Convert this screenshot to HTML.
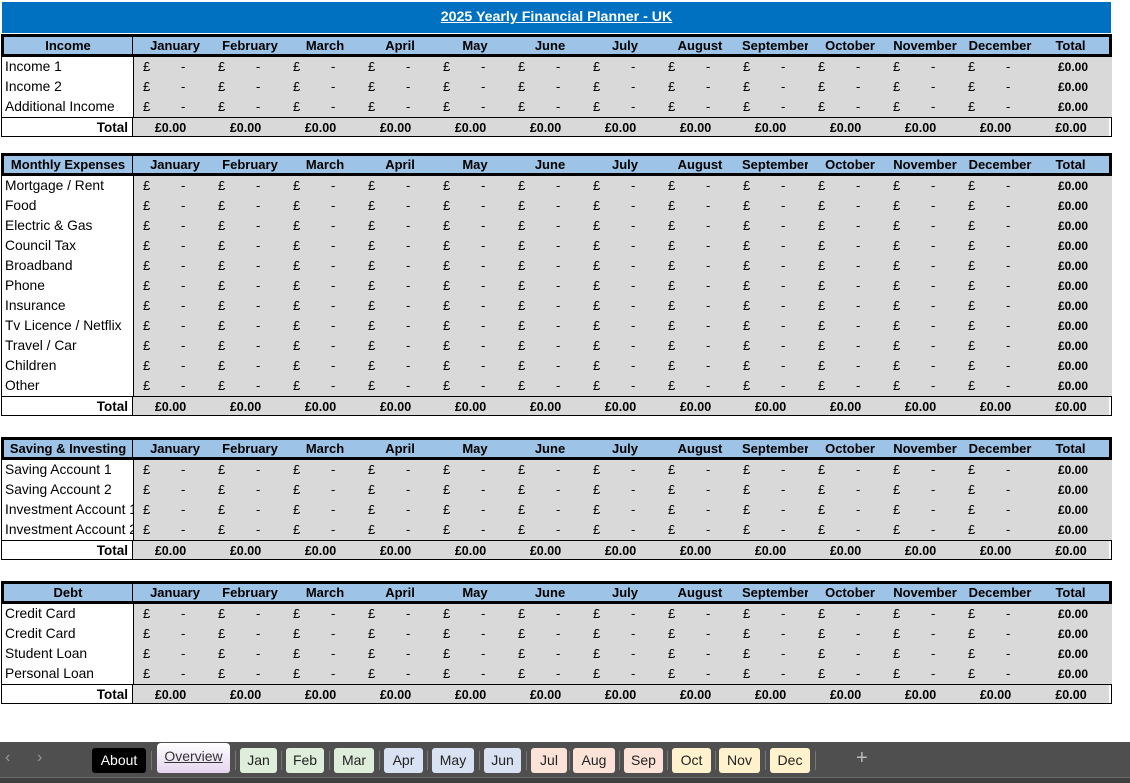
<!DOCTYPE html>
<html><head><meta charset="utf-8"><style>
*{box-sizing:border-box;margin:0;padding:0}
body{width:1130px;height:783px;overflow:hidden;background:#fff;font-family:"Liberation Sans",sans-serif;font-size:13px;color:#000;position:relative}
.title{position:absolute;left:2px;top:2px;width:1109px;height:31px;background:#0070c0;color:#fff;font-weight:bold;font-size:14.2px;text-align:center;line-height:31px;text-decoration:underline}
.sec{position:absolute;left:1px;width:1111px}
.r{display:flex;height:20px;line-height:20px}
.r>div{flex:none;position:relative;white-space:nowrap;overflow:hidden}
.l{width:132px;padding-left:3px;border-right:1px solid #000;background:#fff;font-size:13.8px}
.m{width:75px;background:#d9d9d9;padding-left:9px}
.m i{font-style:normal;position:absolute;left:47px}
.t{width:78px;background:#d9d9d9;text-align:center;font-weight:bold;font-size:12px}
.h{height:23px;line-height:17px;border:3px solid #000;background:#9dc3e6;font-weight:bold}
.r.h>div{background:#9dc3e6;text-align:center;font-size:13px;overflow:visible}
.h .l{width:129px;padding:0}
.h .t{width:75px}
.d{border-left:1px solid #000;border-right:1px solid #000}
.tot{border:1px solid #000;font-weight:bold}
.tot .l{text-align:right;padding-right:4px;width:131px;font-size:13.5px}
.tot .m{text-align:center;padding:0;font-size:12.5px}
.tot .t{width:76px;font-size:12.5px}
.tabs{position:absolute;left:0;top:742px;width:1130px;height:35px;background:#4f4f4f}
.status{position:absolute;left:0;top:777px;width:1130px;height:6px;background:#3f3f3f;border-top:1px solid #6a6a6a}
.tab{position:absolute;top:6px;height:25px;border-radius:3px;font-size:14px;line-height:25px;text-align:center;color:#222}
.sep{position:absolute;top:9px;width:1px;height:19px;background:#777}
</style></head><body>
<div class="title">2025 Yearly Financial Planner - UK</div>

<div class="sec" style="top:34px">
<div class="r h"><div class="l">Income</div><div class="m">January</div><div class="m">February</div><div class="m">March</div><div class="m">April</div><div class="m">May</div><div class="m">June</div><div class="m">July</div><div class="m">August</div><div class="m">September</div><div class="m">October</div><div class="m">November</div><div class="m">December</div><div class="t">Total</div></div>
<div class="r d"><div class="l">Income 1</div><div class="m">£<i>-</i></div><div class="m">£<i>-</i></div><div class="m">£<i>-</i></div><div class="m">£<i>-</i></div><div class="m">£<i>-</i></div><div class="m">£<i>-</i></div><div class="m">£<i>-</i></div><div class="m">£<i>-</i></div><div class="m">£<i>-</i></div><div class="m">£<i>-</i></div><div class="m">£<i>-</i></div><div class="m">£<i>-</i></div><div class="t">£0.00</div></div>
<div class="r d"><div class="l">Income 2</div><div class="m">£<i>-</i></div><div class="m">£<i>-</i></div><div class="m">£<i>-</i></div><div class="m">£<i>-</i></div><div class="m">£<i>-</i></div><div class="m">£<i>-</i></div><div class="m">£<i>-</i></div><div class="m">£<i>-</i></div><div class="m">£<i>-</i></div><div class="m">£<i>-</i></div><div class="m">£<i>-</i></div><div class="m">£<i>-</i></div><div class="t">£0.00</div></div>
<div class="r d"><div class="l">Additional Income</div><div class="m">£<i>-</i></div><div class="m">£<i>-</i></div><div class="m">£<i>-</i></div><div class="m">£<i>-</i></div><div class="m">£<i>-</i></div><div class="m">£<i>-</i></div><div class="m">£<i>-</i></div><div class="m">£<i>-</i></div><div class="m">£<i>-</i></div><div class="m">£<i>-</i></div><div class="m">£<i>-</i></div><div class="m">£<i>-</i></div><div class="t">£0.00</div></div>
<div class="r tot"><div class="l">Total</div><div class="m">£0.00</div><div class="m">£0.00</div><div class="m">£0.00</div><div class="m">£0.00</div><div class="m">£0.00</div><div class="m">£0.00</div><div class="m">£0.00</div><div class="m">£0.00</div><div class="m">£0.00</div><div class="m">£0.00</div><div class="m">£0.00</div><div class="m">£0.00</div><div class="t">£0.00</div></div>
</div>

<div class="sec" style="top:153px">
<div class="r h"><div class="l">Monthly Expenses</div><div class="m">January</div><div class="m">February</div><div class="m">March</div><div class="m">April</div><div class="m">May</div><div class="m">June</div><div class="m">July</div><div class="m">August</div><div class="m">September</div><div class="m">October</div><div class="m">November</div><div class="m">December</div><div class="t">Total</div></div>
<div class="r d"><div class="l">Mortgage / Rent</div><div class="m">£<i>-</i></div><div class="m">£<i>-</i></div><div class="m">£<i>-</i></div><div class="m">£<i>-</i></div><div class="m">£<i>-</i></div><div class="m">£<i>-</i></div><div class="m">£<i>-</i></div><div class="m">£<i>-</i></div><div class="m">£<i>-</i></div><div class="m">£<i>-</i></div><div class="m">£<i>-</i></div><div class="m">£<i>-</i></div><div class="t">£0.00</div></div>
<div class="r d"><div class="l">Food</div><div class="m">£<i>-</i></div><div class="m">£<i>-</i></div><div class="m">£<i>-</i></div><div class="m">£<i>-</i></div><div class="m">£<i>-</i></div><div class="m">£<i>-</i></div><div class="m">£<i>-</i></div><div class="m">£<i>-</i></div><div class="m">£<i>-</i></div><div class="m">£<i>-</i></div><div class="m">£<i>-</i></div><div class="m">£<i>-</i></div><div class="t">£0.00</div></div>
<div class="r d"><div class="l">Electric &amp; Gas</div><div class="m">£<i>-</i></div><div class="m">£<i>-</i></div><div class="m">£<i>-</i></div><div class="m">£<i>-</i></div><div class="m">£<i>-</i></div><div class="m">£<i>-</i></div><div class="m">£<i>-</i></div><div class="m">£<i>-</i></div><div class="m">£<i>-</i></div><div class="m">£<i>-</i></div><div class="m">£<i>-</i></div><div class="m">£<i>-</i></div><div class="t">£0.00</div></div>
<div class="r d"><div class="l">Council Tax</div><div class="m">£<i>-</i></div><div class="m">£<i>-</i></div><div class="m">£<i>-</i></div><div class="m">£<i>-</i></div><div class="m">£<i>-</i></div><div class="m">£<i>-</i></div><div class="m">£<i>-</i></div><div class="m">£<i>-</i></div><div class="m">£<i>-</i></div><div class="m">£<i>-</i></div><div class="m">£<i>-</i></div><div class="m">£<i>-</i></div><div class="t">£0.00</div></div>
<div class="r d"><div class="l">Broadband</div><div class="m">£<i>-</i></div><div class="m">£<i>-</i></div><div class="m">£<i>-</i></div><div class="m">£<i>-</i></div><div class="m">£<i>-</i></div><div class="m">£<i>-</i></div><div class="m">£<i>-</i></div><div class="m">£<i>-</i></div><div class="m">£<i>-</i></div><div class="m">£<i>-</i></div><div class="m">£<i>-</i></div><div class="m">£<i>-</i></div><div class="t">£0.00</div></div>
<div class="r d"><div class="l">Phone</div><div class="m">£<i>-</i></div><div class="m">£<i>-</i></div><div class="m">£<i>-</i></div><div class="m">£<i>-</i></div><div class="m">£<i>-</i></div><div class="m">£<i>-</i></div><div class="m">£<i>-</i></div><div class="m">£<i>-</i></div><div class="m">£<i>-</i></div><div class="m">£<i>-</i></div><div class="m">£<i>-</i></div><div class="m">£<i>-</i></div><div class="t">£0.00</div></div>
<div class="r d"><div class="l">Insurance</div><div class="m">£<i>-</i></div><div class="m">£<i>-</i></div><div class="m">£<i>-</i></div><div class="m">£<i>-</i></div><div class="m">£<i>-</i></div><div class="m">£<i>-</i></div><div class="m">£<i>-</i></div><div class="m">£<i>-</i></div><div class="m">£<i>-</i></div><div class="m">£<i>-</i></div><div class="m">£<i>-</i></div><div class="m">£<i>-</i></div><div class="t">£0.00</div></div>
<div class="r d"><div class="l">Tv Licence / Netflix</div><div class="m">£<i>-</i></div><div class="m">£<i>-</i></div><div class="m">£<i>-</i></div><div class="m">£<i>-</i></div><div class="m">£<i>-</i></div><div class="m">£<i>-</i></div><div class="m">£<i>-</i></div><div class="m">£<i>-</i></div><div class="m">£<i>-</i></div><div class="m">£<i>-</i></div><div class="m">£<i>-</i></div><div class="m">£<i>-</i></div><div class="t">£0.00</div></div>
<div class="r d"><div class="l">Travel / Car</div><div class="m">£<i>-</i></div><div class="m">£<i>-</i></div><div class="m">£<i>-</i></div><div class="m">£<i>-</i></div><div class="m">£<i>-</i></div><div class="m">£<i>-</i></div><div class="m">£<i>-</i></div><div class="m">£<i>-</i></div><div class="m">£<i>-</i></div><div class="m">£<i>-</i></div><div class="m">£<i>-</i></div><div class="m">£<i>-</i></div><div class="t">£0.00</div></div>
<div class="r d"><div class="l">Children</div><div class="m">£<i>-</i></div><div class="m">£<i>-</i></div><div class="m">£<i>-</i></div><div class="m">£<i>-</i></div><div class="m">£<i>-</i></div><div class="m">£<i>-</i></div><div class="m">£<i>-</i></div><div class="m">£<i>-</i></div><div class="m">£<i>-</i></div><div class="m">£<i>-</i></div><div class="m">£<i>-</i></div><div class="m">£<i>-</i></div><div class="t">£0.00</div></div>
<div class="r d"><div class="l">Other</div><div class="m">£<i>-</i></div><div class="m">£<i>-</i></div><div class="m">£<i>-</i></div><div class="m">£<i>-</i></div><div class="m">£<i>-</i></div><div class="m">£<i>-</i></div><div class="m">£<i>-</i></div><div class="m">£<i>-</i></div><div class="m">£<i>-</i></div><div class="m">£<i>-</i></div><div class="m">£<i>-</i></div><div class="m">£<i>-</i></div><div class="t">£0.00</div></div>
<div class="r tot"><div class="l">Total</div><div class="m">£0.00</div><div class="m">£0.00</div><div class="m">£0.00</div><div class="m">£0.00</div><div class="m">£0.00</div><div class="m">£0.00</div><div class="m">£0.00</div><div class="m">£0.00</div><div class="m">£0.00</div><div class="m">£0.00</div><div class="m">£0.00</div><div class="m">£0.00</div><div class="t">£0.00</div></div>
</div>

<div class="sec" style="top:437px">
<div class="r h"><div class="l">Saving &amp; Investing</div><div class="m">January</div><div class="m">February</div><div class="m">March</div><div class="m">April</div><div class="m">May</div><div class="m">June</div><div class="m">July</div><div class="m">August</div><div class="m">September</div><div class="m">October</div><div class="m">November</div><div class="m">December</div><div class="t">Total</div></div>
<div class="r d"><div class="l">Saving Account 1</div><div class="m">£<i>-</i></div><div class="m">£<i>-</i></div><div class="m">£<i>-</i></div><div class="m">£<i>-</i></div><div class="m">£<i>-</i></div><div class="m">£<i>-</i></div><div class="m">£<i>-</i></div><div class="m">£<i>-</i></div><div class="m">£<i>-</i></div><div class="m">£<i>-</i></div><div class="m">£<i>-</i></div><div class="m">£<i>-</i></div><div class="t">£0.00</div></div>
<div class="r d"><div class="l">Saving Account 2</div><div class="m">£<i>-</i></div><div class="m">£<i>-</i></div><div class="m">£<i>-</i></div><div class="m">£<i>-</i></div><div class="m">£<i>-</i></div><div class="m">£<i>-</i></div><div class="m">£<i>-</i></div><div class="m">£<i>-</i></div><div class="m">£<i>-</i></div><div class="m">£<i>-</i></div><div class="m">£<i>-</i></div><div class="m">£<i>-</i></div><div class="t">£0.00</div></div>
<div class="r d"><div class="l">Investment Account 1</div><div class="m">£<i>-</i></div><div class="m">£<i>-</i></div><div class="m">£<i>-</i></div><div class="m">£<i>-</i></div><div class="m">£<i>-</i></div><div class="m">£<i>-</i></div><div class="m">£<i>-</i></div><div class="m">£<i>-</i></div><div class="m">£<i>-</i></div><div class="m">£<i>-</i></div><div class="m">£<i>-</i></div><div class="m">£<i>-</i></div><div class="t">£0.00</div></div>
<div class="r d"><div class="l">Investment Account 2</div><div class="m">£<i>-</i></div><div class="m">£<i>-</i></div><div class="m">£<i>-</i></div><div class="m">£<i>-</i></div><div class="m">£<i>-</i></div><div class="m">£<i>-</i></div><div class="m">£<i>-</i></div><div class="m">£<i>-</i></div><div class="m">£<i>-</i></div><div class="m">£<i>-</i></div><div class="m">£<i>-</i></div><div class="m">£<i>-</i></div><div class="t">£0.00</div></div>
<div class="r tot"><div class="l">Total</div><div class="m">£0.00</div><div class="m">£0.00</div><div class="m">£0.00</div><div class="m">£0.00</div><div class="m">£0.00</div><div class="m">£0.00</div><div class="m">£0.00</div><div class="m">£0.00</div><div class="m">£0.00</div><div class="m">£0.00</div><div class="m">£0.00</div><div class="m">£0.00</div><div class="t">£0.00</div></div>
</div>

<div class="sec" style="top:581px">
<div class="r h"><div class="l">Debt</div><div class="m">January</div><div class="m">February</div><div class="m">March</div><div class="m">April</div><div class="m">May</div><div class="m">June</div><div class="m">July</div><div class="m">August</div><div class="m">September</div><div class="m">October</div><div class="m">November</div><div class="m">December</div><div class="t">Total</div></div>
<div class="r d"><div class="l">Credit Card</div><div class="m">£<i>-</i></div><div class="m">£<i>-</i></div><div class="m">£<i>-</i></div><div class="m">£<i>-</i></div><div class="m">£<i>-</i></div><div class="m">£<i>-</i></div><div class="m">£<i>-</i></div><div class="m">£<i>-</i></div><div class="m">£<i>-</i></div><div class="m">£<i>-</i></div><div class="m">£<i>-</i></div><div class="m">£<i>-</i></div><div class="t">£0.00</div></div>
<div class="r d"><div class="l">Credit Card</div><div class="m">£<i>-</i></div><div class="m">£<i>-</i></div><div class="m">£<i>-</i></div><div class="m">£<i>-</i></div><div class="m">£<i>-</i></div><div class="m">£<i>-</i></div><div class="m">£<i>-</i></div><div class="m">£<i>-</i></div><div class="m">£<i>-</i></div><div class="m">£<i>-</i></div><div class="m">£<i>-</i></div><div class="m">£<i>-</i></div><div class="t">£0.00</div></div>
<div class="r d"><div class="l">Student Loan</div><div class="m">£<i>-</i></div><div class="m">£<i>-</i></div><div class="m">£<i>-</i></div><div class="m">£<i>-</i></div><div class="m">£<i>-</i></div><div class="m">£<i>-</i></div><div class="m">£<i>-</i></div><div class="m">£<i>-</i></div><div class="m">£<i>-</i></div><div class="m">£<i>-</i></div><div class="m">£<i>-</i></div><div class="m">£<i>-</i></div><div class="t">£0.00</div></div>
<div class="r d"><div class="l">Personal Loan</div><div class="m">£<i>-</i></div><div class="m">£<i>-</i></div><div class="m">£<i>-</i></div><div class="m">£<i>-</i></div><div class="m">£<i>-</i></div><div class="m">£<i>-</i></div><div class="m">£<i>-</i></div><div class="m">£<i>-</i></div><div class="m">£<i>-</i></div><div class="m">£<i>-</i></div><div class="m">£<i>-</i></div><div class="m">£<i>-</i></div><div class="t">£0.00</div></div>
<div class="r tot"><div class="l">Total</div><div class="m">£0.00</div><div class="m">£0.00</div><div class="m">£0.00</div><div class="m">£0.00</div><div class="m">£0.00</div><div class="m">£0.00</div><div class="m">£0.00</div><div class="m">£0.00</div><div class="m">£0.00</div><div class="m">£0.00</div><div class="m">£0.00</div><div class="m">£0.00</div><div class="t">£0.00</div></div>
</div>

<div class="tabs">
<div style="position:absolute;left:5px;top:7px;color:#999;font-size:16px">&lsaquo;</div>
<div style="position:absolute;left:37px;top:7px;color:#999;font-size:16px">&rsaquo;</div>
<div class="tab" style="left:92px;width:54px;background:#000;color:#fff">About</div>
<div class="sep" style="left:151px"></div>
<div class="tab" style="left:157px;width:73px;top:1px;height:30px;line-height:26px;background:linear-gradient(#fff,#e4d4ef);color:#333;text-decoration:underline;border-radius:4px 4px 3px 3px">Overview</div>
<div class="sep" style="left:235px"></div>
<div class="tab" style="left:240px;width:37px;background:#dfeedb">Jan</div>
<div class="sep" style="left:281px"></div>
<div class="tab" style="left:286px;width:38px;background:#dfeedb">Feb</div>
<div class="sep" style="left:329px"></div>
<div class="tab" style="left:334px;width:40px;background:#dfeedb">Mar</div>
<div class="sep" style="left:379px"></div>
<div class="tab" style="left:384px;width:39px;background:#d9e2f2">Apr</div>
<div class="sep" style="left:427px"></div>
<div class="tab" style="left:432px;width:42px;background:#d9e2f2">May</div>
<div class="sep" style="left:479px"></div>
<div class="tab" style="left:484px;width:37px;background:#d9e2f2">Jun</div>
<div class="sep" style="left:526px"></div>
<div class="tab" style="left:531px;width:36px;background:#fbe3d7">Jul</div>
<div class="sep" style="left:569px"></div>
<div class="tab" style="left:573px;width:42px;background:#fbe3d7">Aug</div>
<div class="sep" style="left:619px"></div>
<div class="tab" style="left:624px;width:39px;background:#fbe3d7">Sep</div>
<div class="sep" style="left:667px"></div>
<div class="tab" style="left:672px;width:39px;background:#fff2cc">Oct</div>
<div class="sep" style="left:715px"></div>
<div class="tab" style="left:719px;width:41px;background:#fff2cc">Nov</div>
<div class="sep" style="left:765px"></div>
<div class="tab" style="left:770px;width:40px;background:#fff2cc">Dec</div>
<div class="sep" style="left:815px"></div>
<div style="position:absolute;left:856px;top:5px;color:#bbb;font-size:20px">+</div>
</div>
<div class="status"></div>
</body></html>
